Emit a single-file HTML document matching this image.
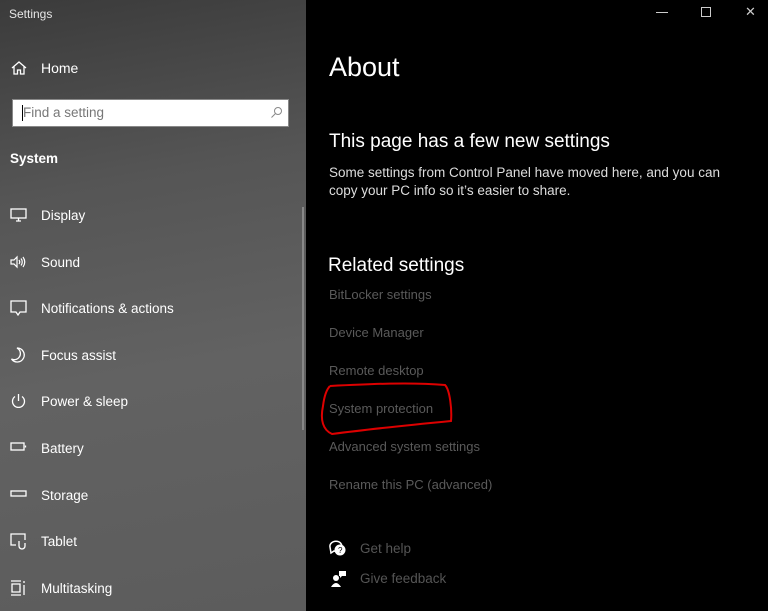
<!DOCTYPE html>
<html><head><style>
*{margin:0;padding:0;box-sizing:border-box}
body{width:768px;height:611px;overflow:hidden;background:#000;font-family:"Liberation Sans",sans-serif;position:relative}
#side{position:absolute;left:0;top:0;width:306px;height:611px;background:linear-gradient(170deg,#3b3b3b 0%,#555 30%,#626262 60%,#5c5c5c 100%)}
.t{position:absolute;color:#fff;white-space:nowrap}
.ic{position:absolute;left:10px}
.g{color:#5a5a5a;font-size:13px}
</style></head><body>
<div id="side">
<div class="t" style="left:9px;top:7px;font-size:12px;color:#e6e6e6">Settings</div>
<svg class="ic" style="top:60px" width="18" height="16" viewBox="0 0 18 16" fill="none" stroke="#fff" stroke-width="1.3"><path d="M2 8 L9 2 L16 8 M4 6.5 V14 H7.5 V10 H10.5 V14 H14 V6.5"/></svg>
<div class="t" style="left:41px;top:60px;font-size:14px">Home</div>
<div style="position:absolute;left:12px;top:99px;width:277px;height:28px;background:#fff;border:1px solid #888"></div>
<div style="position:absolute;left:22px;top:105px;width:1px;height:16px;background:#000"></div>
<div class="t" style="left:23px;top:105px;font-size:13.5px;color:#777">Find a setting</div>
<svg style="position:absolute;left:270px;top:106px" width="13" height="13" viewBox="0 0 13 13" fill="none" stroke="#888" stroke-width="1"><circle cx="8" cy="5" r="3.5"/><path d="M5.5 7.5 L1.5 11.5"/></svg>
<div class="t" style="left:10px;top:151px;font-size:13.5px;font-weight:bold">System</div>
<div style="position:absolute;left:302px;top:207px;width:2px;height:223px;background:#888"></div>

<svg class="ic" style="top:207px" width="17" height="16" viewBox="0 0 17 16" fill="none" stroke="#fff" stroke-width="1.3"><rect x="1" y="2" width="15" height="9"/><path d="M6 14 H11 M8.5 11 V14"/></svg>
<div class="t" style="left:41px;top:208px;font-size:13.5px">Display</div>
<svg class="ic" style="top:254px" width="17" height="16" viewBox="0 0 17 16" fill="none" stroke="#fff" stroke-width="1.2"><path d="M1 6 H4 L7 3 V13 L4 10 H1 Z M9 6 Q10.5 8 9 10 M11 4.5 Q13.5 8 11 11.5 M13 3 Q16.5 8 13 13"/></svg>
<div class="t" style="left:41px;top:255px;font-size:13.5px">Sound</div>
<svg class="ic" style="top:300px" width="17" height="17" viewBox="0 0 17 17" fill="none" stroke="#fff" stroke-width="1.3"><path d="M1 1 H16 V12 H10 L8 15 L6 12 H1 Z"/></svg>
<div class="t" style="left:41px;top:301px;font-size:13.5px">Notifications &amp; actions</div>
<svg class="ic" style="top:347px" width="17" height="17" viewBox="0 0 17 17" fill="none" stroke="#fff" stroke-width="1.3"><path d="M7 1 A7 7 0 1 1 1.5 12 A6 6 0 0 0 7 1 Z"/></svg>
<div class="t" style="left:41px;top:348px;font-size:13.5px">Focus assist</div>
<svg class="ic" style="top:393px" width="17" height="17" viewBox="0 0 17 17" fill="none" stroke="#fff" stroke-width="1.3"><path d="M5 3.5 A6 6 0 1 0 12 3.5 M8.5 1 V8"/></svg>
<div class="t" style="left:41px;top:394px;font-size:13.5px">Power &amp; sleep</div>
<svg class="ic" style="top:442px" width="17" height="10" viewBox="0 0 17 10" fill="none" stroke="#fff" stroke-width="1.3"><rect x="1" y="1" width="13" height="7"/><path d="M15.5 3.5 V5.5"/></svg>
<div class="t" style="left:41px;top:441px;font-size:13.5px">Battery</div>
<svg class="ic" style="top:490px" width="17" height="8" viewBox="0 0 17 8" fill="none" stroke="#fff" stroke-width="1.3"><rect x="1" y="1" width="15" height="5"/></svg>
<div class="t" style="left:41px;top:488px;font-size:13.5px">Storage</div>
<svg class="ic" style="top:533px" width="17" height="17" viewBox="0 0 17 17" fill="none" stroke="#fff" stroke-width="1.3"><path d="M6 12 H1 V1 H15 V7 M9 8 V13 A3 3 0 0 0 15 13 V10"/></svg>
<div class="t" style="left:41px;top:534px;font-size:13.5px">Tablet</div>
<svg class="ic" style="top:580px" width="17" height="17" viewBox="0 0 17 17" fill="none" stroke="#fff" stroke-width="1.3"><path d="M1 1 H11 M1 15 H11 M2 4 H10 V12 H2 Z M14 1 V3 M14 5 V15"/></svg>
<div class="t" style="left:41px;top:581px;font-size:13.5px">Multitasking</div>
</div>

<div style="position:absolute;left:656px;top:12px;width:12px;height:1px;background:#ccc"></div>
<div style="position:absolute;left:701px;top:7px;width:10px;height:10px;border:1px solid #ccc"></div>
<div class="t" style="left:745px;top:4px;font-size:13px;color:#ccc">✕</div>

<div class="t" style="left:329px;top:52px;font-size:27px">About</div>
<div class="t" style="left:329px;top:131px;font-size:19px">This page has a few new settings</div>
<div class="t" style="left:329px;top:164px;font-size:13.5px;line-height:18px;color:#ddd">Some settings from Control Panel have moved here, and you can<br>copy your PC info so it’s easier to share.</div>
<div class="t" style="left:328px;top:255px;font-size:19px">Related settings</div>
<div class="t g" style="left:329px;top:287px">BitLocker settings</div>
<div class="t g" style="left:329px;top:325px">Device Manager</div>
<div class="t g" style="left:329px;top:363px">Remote desktop</div>
<div class="t g" style="left:329px;top:401px">System protection</div>
<div class="t g" style="left:329px;top:439px">Advanced system settings</div>
<div class="t g" style="left:329px;top:477px">Rename this PC (advanced)</div>
<svg style="position:absolute;left:310px;top:380px" width="150" height="60" viewBox="0 0 150 60" fill="none" stroke="#d00" stroke-width="2"><path d="M20 6 C60 4 100 2 135 5 C140 10 142 30 141 41 C110 44 60 49 22 54 C13 50 10 40 13 26 C14 18 16 10 20 6"/></svg>
<svg style="position:absolute;left:329px;top:540px" width="18" height="17" viewBox="0 0 18 17" fill="#fff"><path d="M1 7 A6 5 0 1 1 5 11 L2 13 Z" fill="none" stroke="#fff" stroke-width="1.5"/><circle cx="11" cy="10" r="5.5"/><text x="9" y="13" font-size="8" fill="#000" font-family="Liberation Sans">?</text></svg>
<div class="t" style="left:360px;top:541px;font-size:13.5px;color:#555">Get help</div>
<svg style="position:absolute;left:331px;top:570px" width="16" height="17" viewBox="0 0 16 17" fill="#fff"><circle cx="5" cy="8" r="3"/><path d="M0 17 Q5 9 10 17 Z M8 1 H15 V6 H11 L9 8 V6 H8 Z"/></svg>
<div class="t" style="left:360px;top:571px;font-size:13.5px;color:#555">Give feedback</div>
</body></html>
